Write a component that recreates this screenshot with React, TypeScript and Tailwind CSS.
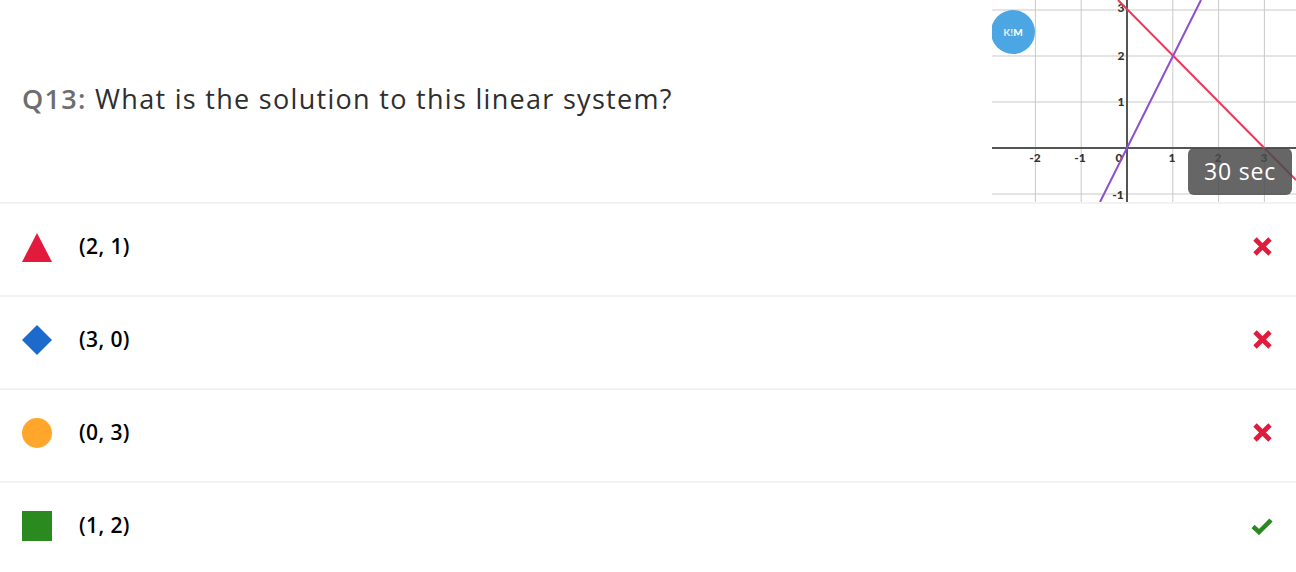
const answers = [
  { label: "(2, 1)", shape: "triangle", correct: false },
  { label: "(3, 0)", shape: "diamond", correct: false },
  { label: "(0, 3)", shape: "circle", correct: false },
  { label: "(1, 2)", shape: "square", correct: true },
];

function Shape({ kind }: { kind: string }) {
  if (kind === "triangle")
    return (
      <svg width="30" height="30" viewBox="0 0 30 30">
        <polygon points="15,1 30,30 0,30" fill="#e21b3c" />
      </svg>
    );
  if (kind === "diamond")
    return (
      <svg width="30" height="30" viewBox="0 0 30 30">
        <polygon points="15,0 30,15 15,30 0,15" fill="#1c6acb" />
      </svg>
    );
  if (kind === "circle") return <div className="h-[30px] w-[30px] rounded-full bg-[#ffa62b]" />;
  return <div className="h-[30px] w-[30px] bg-[#2b8a1f]" />;
}

function Mark({ correct }: { correct: boolean }) {
  if (correct)
    return (
      <svg width="22" height="18" viewBox="0 0 22 18">
        <path d="M2 9.5 L8 15 L20 3" fill="none" stroke="#2b8a1f" strokeWidth="4.5" />
      </svg>
    );
  return (
    <svg width="21" height="21" viewBox="0 0 21 21">
      <path d="M3 3 L18 18 M18 3 L3 18" fill="none" stroke="#e21b3c" strokeWidth="4.8" />
    </svg>
  );
}

function Graph() {
  const ox = 135;
  const oy = 148;
  const u = 45.8;
  const xs = [-3, -2, -1, 0, 1, 2, 3];
  const ys = [-1, 1, 2, 3];
  return (
    <svg width="304" height="202" viewBox="0 0 304 202" className="block">
      <rect width="304" height="202" fill="#fff" />
      {xs.map((k) => (
        <line key={"v" + k} x1={ox + k * u} y1="0" x2={ox + k * u} y2="202" stroke="#c9c9c9" strokeWidth="1" />
      ))}
      {ys.map((k) => (
        <line key={"h" + k} x1="0" y1={oy - k * 46} x2="304" y2={oy - k * 46} stroke="#c9c9c9" strokeWidth="1" />
      ))}
      <line x1="0" y1={oy} x2="304" y2={oy} stroke="#555" strokeWidth="2" />
      <line x1={ox} y1="0" x2={ox} y2="202" stroke="#555" strokeWidth="2" />
      <g fontFamily="Lato, sans-serif" fontWeight="900" fontSize="12" fill="#333" textAnchor="middle">
        <text x="43" y="162">-2</text>
        <text x="88" y="162">-1</text>
        <text x="127" y="162">0</text>
        <text x="180" y="162">1</text>
        <text x="226" y="162">2</text>
        <text x="272" y="162">3</text>
        <text x="129" y="12">3</text>
        <text x="129" y="60">2</text>
        <text x="129" y="106">1</text>
        <text x="126" y="199">-1</text>
      </g>
      <line x1="126" y1="0" x2="304" y2="180" stroke="#f0375a" strokeWidth="2" />
      <line x1="108" y1="202" x2="209" y2="0" stroke="#8a4fd0" strokeWidth="2" />
      <circle cx="21" cy="32" r="22" fill="#4da6e4" />
      <text x="21" y="36" textAnchor="middle" fontFamily="Lato, sans-serif" fontWeight="900" fontSize="10" fill="#fff">
        <tspan fill="#d6ebfa">K!</tspan>M
      </text>
    </svg>
  );
}

export default function App() {
  return (
    <main className="min-h-screen bg-white font-['Open_Sans','Noto_Sans',sans-serif] text-black">
      <header className="flex h-[204px] items-stretch border-b-2 border-[#f2f2f2]">
        <div className="flex flex-1 items-center pb-[4px] pl-[22px]">
          <h1 className="text-[27px] font-normal tracking-[1.3px] text-[#2e2e2e]">
            <span className="font-semibold text-[#6e6e6e]">Q13:</span> What is the solution to this linear system?
          </h1>
        </div>
        <div className="relative h-[202px] w-[304px] overflow-hidden">
          <Graph />
          <div className="absolute left-[196px] top-[148px] flex h-[47px] w-[104px] items-center justify-center rounded-[6px] bg-[rgba(75,75,75,0.85)] text-[23px] tracking-[0.8px] text-white">
            30 sec
          </div>
        </div>
      </header>
      {answers.map((a) => (
        <div key={a.label} className="flex h-[93px] items-center border-b-2 border-[#f2f2f2] pb-[6px] pl-[22px] pr-[22px]">
          <Shape kind={a.shape} />
          <span className="ml-[27px] text-[21px] font-semibold tracking-[0.4px]">{a.label}</span>
          <div className="ml-auto flex w-[24px] justify-center">
            <Mark correct={a.correct} />
          </div>
        </div>
      ))}
    </main>
  );
}
